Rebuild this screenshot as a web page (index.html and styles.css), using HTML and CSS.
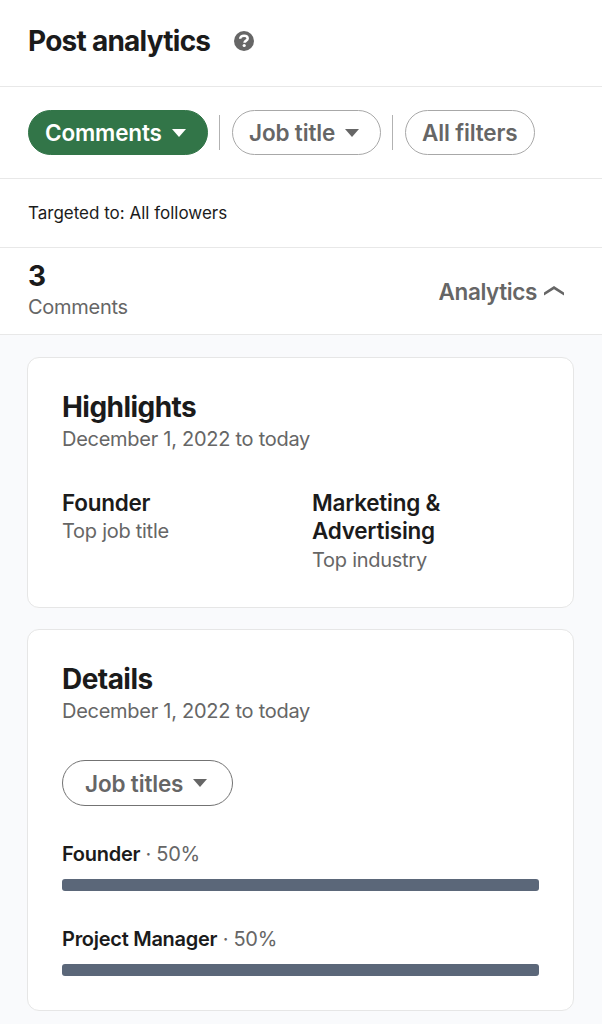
FILE: index.html
```html
<!DOCTYPE html>
<html lang="en">
<head>
    <meta charset="UTF-8">
    <meta name="viewport" content="width=device-width, initial-scale=1.0">
    <title>Post analytics</title>
    <link rel="stylesheet" href="styles.css">
</head>
<body>
    <header class="header">
        <h1>Post analytics</h1>
        <svg class="help" viewBox="0 0 20 20" aria-label="Help">
            <circle cx="10" cy="10" r="10" fill="#666"/>
            <path d="M6.2 7.8C6.2 5.9 7.8 4.8 10 4.8s3.7 1 3.7 2.7c0 2.2-3.2 2-3.2 4.3" fill="none" stroke="#fff" stroke-width="2.5"/>
            <circle cx="10.2" cy="14.5" r="1.6" fill="#fff"/>
        </svg>
    </header>

    <nav class="filters">
        <button class="pill pill-active">Comments<svg class="caret" viewBox="0 0 14 8"><path d="M0 0h14L7 8z"/></svg></button>
        <span class="divider"></span>
        <button class="pill pill-job">Job title<svg class="caret" viewBox="0 0 14 8"><path d="M0 0h14L7 8z"/></svg></button>
        <span class="divider"></span>
        <button class="pill pill-all">All filters</button>
    </nav>

    <div class="targeted">Targeted to: All followers</div>

    <section class="summary">
        <div>
            <div class="count">3</div>
            <div class="muted">Comments</div>
        </div>
        <a class="toggle">Analytics<svg class="chevron" viewBox="0 0 20 10"><path d="M0 6.4L10 0l10 6.4v3.2L10 3.2 0 9.6z"/></svg></a>
    </section>

    <main class="panel">
        <section class="card highlights">
            <h2>Highlights</h2>
            <p class="muted dates">December 1, 2022 to today</p>
            <div class="tops">
                <div>
                    <h3>Founder</h3>
                    <p class="muted">Top job title</p>
                </div>
                <div>
                    <h3>Marketing &amp;<br>Advertising</h3>
                    <p class="muted">Top industry</p>
                </div>
            </div>
        </section>

        <section class="card details">
            <h2>Details</h2>
            <p class="muted dates">December 1, 2022 to today</p>
            <button class="pill pill-titles">Job titles<svg class="caret" viewBox="0 0 14 8"><path d="M0 0h14L7 8z"/></svg></button>
            <div class="row">
                <p class="muted"><b>Founder</b> · 50%</p>
                <div class="bar"></div>
            </div>
            <div class="row">
                <p class="muted"><b>Project Manager</b> · 50%</p>
                <div class="bar"></div>
            </div>
        </section>
    </main>
</body>
</html>
```
FILE: styles.css
```css
*{
    box-sizing: border-box;
    margin: 0;
    padding: 0;
}
body{
    font-family: Inter, Arial, sans-serif;
    background-color: #fff;
    color: #1b1b1b;
}
h1, h2, .count{
    font-size: 28px;
    font-weight: 650;
    line-height: 34px;
    letter-spacing: -0.55px;
}
h1{
    letter-spacing: -0.75px;
}
h3{
    font-size: 22.5px;
    font-weight: 630;
    line-height: 28.4px;
    letter-spacing: -0.25px;
}
.muted{
    font-size: 20px;
    line-height: 28px;
    letter-spacing: -0.27px;
    color: #666;
}
.header{
    display: flex;
    align-items: center;
    gap: 24px;
    height: 87px;
    padding: 0 28px 5px;
    border-bottom: 1px solid #e8e8e8;
}
.help{
    width: 20px;
    height: 20px;
}
.filters{
    display: flex;
    align-items: center;
    height: 92px;
    padding: 0 28px;
    border-bottom: 1px solid #e8e8e8;
}
.pill{
    display: flex;
    align-items: center;
    gap: 10px;
    height: 45px;
    padding-left: 16px;
    border: 1px solid #a8a8a8;
    border-radius: 23px;
    background-color: #fff;
    color: #666;
    font-family: inherit;
    font-size: 22.5px;
    font-weight: 630;
    letter-spacing: -0.15px;
    white-space: nowrap;
}
.pill-active{
    width: 180px;
    background-color: #327548;
    border-color: #327548;
    color: #fff;
}
.pill-job{
    width: 149px;
}
.pill-all{
    width: 130px;
}
.caret{
    width: 14px;
    height: 8px;
    fill: currentColor;
}
.divider{
    width: 1px;
    height: 35px;
    margin: 0 12px 0 11px;
    background-color: #b2b2b2;
}
.targeted{
    height: 69px;
    padding: 0 28px;
    border-bottom: 1px solid #e8e8e8;
    font-size: 17px;
    line-height: 69px;
}
.summary{
    display: flex;
    justify-content: space-between;
    align-items: center;
    height: 87px;
    padding: 0 38px 0 28px;
    border-bottom: 1px solid #e8e8e8;
}
.summary .count{
    line-height: 36px;
}
.summary .muted{
    padding-bottom: 3px;
    line-height: 27px;
}
.toggle{
    display: flex;
    align-items: center;
    gap: 7px;
    color: #666;
    font-size: 22.5px;
    font-weight: 630;
    letter-spacing: -0.4px;
}
.chevron{
    width: 20px;
    height: 10px;
    fill: currentColor;
}
.panel{
    display: flex;
    flex-direction: column;
    gap: 21px;
    height: 689px;
    padding: 22px 28px 0 27px;
    background-color: #f9fafc;
}
.card{
    padding: 32px 34px 0;
    border: 1px solid #e6e6e6;
    border-radius: 12px;
    background-color: #fff;
}
.dates{
    padding-top: 1px;
}
.highlights{
    height: 251px;
}
.details{
    height: 382px;
}
.tops{
    display: grid;
    grid-template-columns: 250px 1fr;
    margin-top: 36px;
}
.pill-titles{
    width: 171px;
    height: 46px;
    margin: 35px 0 34px;
    padding-left: 22px;
    border-color: #737373;
}
.row{
    height: 85px;
}
.row b{
    font-weight: 630;
    color: #1b1b1b;
}
.bar{
    height: 12px;
    margin-top: 11px;
    border-radius: 3px;
    background-color: #5b6779;
}
```
